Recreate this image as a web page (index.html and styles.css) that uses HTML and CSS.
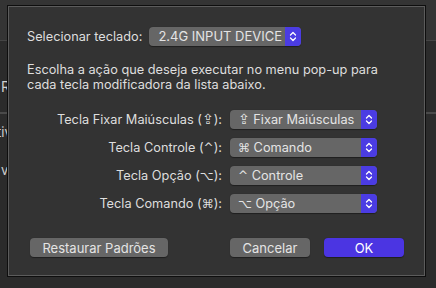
FILE: index.html
```html
<!DOCTYPE html>
<html lang="pt">
<head>
    <meta charset="UTF-8">
    <title>Teclas Modificadoras</title>
    <link rel="stylesheet" href="styles.css">
</head>
<body>
    <div class="window">
        <div class="toolbar"></div>
        <div class="pane">
            <p class="ghost ghost-r">R</p>
            <div class="pane-line"></div>
            <p class="ghost ghost-tiv">tiv</p>
            <p class="ghost ghost-v">v</p>
        </div>
    </div>

    <div class="sheet">
        <div class="keyboard-row">
            <span>Selecionar teclado:</span>
            <div class="popup popup-wide">
                <span class="popup-text">2.4G INPUT DEVICE</span>
                <span class="popup-arrows">
                    <svg width="8" height="13" viewBox="0 0 8 13"><path d="M1.5 5 L4 2.5 L6.5 5 M1.5 8 L4 10.5 L6.5 8" fill="none" stroke="#fff" stroke-width="1.3" stroke-linecap="round" stroke-linejoin="round"/></svg>
                </span>
            </div>
        </div>

        <p class="intro">Escolha a ação que deseja executar no menu pop-up para cada tecla modificadora da lista abaixo.</p>

        <div class="keys">
            <span class="key-label">Tecla Fixar Maiúsculas (<span class="sym sym-caps">⇪</span>):</span>
            <div class="popup">
                <span class="popup-text"><span class="sym sym-caps">⇪</span> Fixar Maiúsculas</span>
                <span class="popup-arrows">
                    <svg width="8" height="13" viewBox="0 0 8 13"><path d="M1.5 5 L4 2.5 L6.5 5 M1.5 8 L4 10.5 L6.5 8" fill="none" stroke="#fff" stroke-width="1.3" stroke-linecap="round" stroke-linejoin="round"/></svg>
                </span>
            </div>

            <span class="key-label">Tecla Controle (<span class="sym">^</span>):</span>
            <div class="popup">
                <span class="popup-text"><span class="sym">⌘</span> Comando</span>
                <span class="popup-arrows">
                    <svg width="8" height="13" viewBox="0 0 8 13"><path d="M1.5 5 L4 2.5 L6.5 5 M1.5 8 L4 10.5 L6.5 8" fill="none" stroke="#fff" stroke-width="1.3" stroke-linecap="round" stroke-linejoin="round"/></svg>
                </span>
            </div>

            <span class="key-label">Tecla Opção (<span class="sym">⌥</span>):</span>
            <div class="popup">
                <span class="popup-text"><span class="sym">^</span> Controle</span>
                <span class="popup-arrows">
                    <svg width="8" height="13" viewBox="0 0 8 13"><path d="M1.5 5 L4 2.5 L6.5 5 M1.5 8 L4 10.5 L6.5 8" fill="none" stroke="#fff" stroke-width="1.3" stroke-linecap="round" stroke-linejoin="round"/></svg>
                </span>
            </div>

            <span class="key-label">Tecla Comando (<span class="sym">⌘</span>):</span>
            <div class="popup">
                <span class="popup-text"><span class="sym">⌥</span> Opção</span>
                <span class="popup-arrows">
                    <svg width="8" height="13" viewBox="0 0 8 13"><path d="M1.5 5 L4 2.5 L6.5 5 M1.5 8 L4 10.5 L6.5 8" fill="none" stroke="#fff" stroke-width="1.3" stroke-linecap="round" stroke-linejoin="round"/></svg>
                </span>
            </div>
        </div>

        <div class="buttons">
            <button class="btn btn-restore">Restaurar Padrões</button>
            <div class="right-buttons">
                <button class="btn btn-cancel">Cancelar</button>
                <button class="btn btn-ok">OK</button>
            </div>
        </div>
    </div>
</body>
</html>
```

FILE: styles.css
```css
body {
    margin: 0;
    width: 436px;
    height: 288px;
    overflow: hidden;
    background-color: #2b2b2b;
    font-family: Inter, "Liberation Sans", sans-serif;
    font-size: 12.75px;
    color: #dedede;
}
.window {
    height: 288px;
    display: flex;
    flex-direction: column;
}
.toolbar {
    height: 40px;
    background-color: #343434;
    border-bottom: 1px solid #454545;
}
.pane {
    flex: 1;
    padding-top: 38px;
}
.ghost {
    margin: 0;
    color: #cfcfcf;
    font-size: 13px;
    line-height: 16px;
}
.ghost-r {
    padding-left: 1px;
    font-size: 14px;
}
.pane-line {
    margin-top: 17px;
    height: 2px;
    background-color: #4a4a4a;
}
.ghost-tiv {
    margin-top: 10px;
    margin-left: -3px;
}
.ghost-v {
    margin-top: 22px;
    padding-left: 1px;
}

/* the sheet lies over the window behind it */
.sheet {
    position: absolute;
    left: 8px;
    top: 6px;
    width: 417px;
    height: 270px;
    box-sizing: border-box;
    padding: 20px 18px 0 18px;
    background-color: #333333;
    border: 1px solid #5c5c5c;
    outline: 1px solid #0e0e0e;
}
.keyboard-row {
    display: flex;
    align-items: center;
    gap: 7px;
}
.popup {
    display: flex;
    height: 19px;
    width: 147px;
    border-radius: 4px;
    overflow: hidden;
    background-color: #666666;
    box-shadow: 0 0.5px 1px rgba(0, 0, 0, 0.4);
}
.popup-wide {
    width: 152px;
}
.popup-text {
    flex: 1;
    padding-left: 8px;
    line-height: 19px;
    color: #e4e4e4;
    white-space: nowrap;
}
.popup-wide .popup-text {
    padding-left: 9px;
    font-size: 13px;
}
.popup-arrows {
    width: 16px;
    display: flex;
    align-items: center;
    justify-content: center;
    background-color: #4b3ce3;
}
.intro {
    margin: 16px 0 0 0;
    line-height: 15px;
    width: 360px;
}
.keys {
    margin-top: 18px;
    display: grid;
    grid-template-columns: 195px 147px;
    column-gap: 8px;
    row-gap: 9px;
    align-items: center;
}
.key-label {
    text-align: right;
    white-space: nowrap;
}
.sym {
    font-family: "DejaVu Sans", sans-serif;
    font-size: 12px;
}
.sym-caps {
    font-size: 14px;
    line-height: 1;
}
.buttons {
    margin-top: 25px;
    display: flex;
    justify-content: space-between;
    padding-left: 3px;
    padding-right: 2px;
}
.right-buttons {
    display: flex;
    gap: 14px;
}
.btn {
    height: 19px;
    padding: 0;
    border: none;
    border-radius: 4px;
    font-family: Inter, "Liberation Sans", sans-serif;
    font-size: 13px;
    color: #e4e4e4;
    background-color: #666666;
    box-shadow: 0 0.5px 1px rgba(0, 0, 0, 0.4);
}
.btn-restore {
    width: 138px;
}
.btn-cancel {
    width: 80px;
}
.btn-ok {
    width: 80px;
    background-color: #4b35e2;
    color: #ffffff;
}
```
